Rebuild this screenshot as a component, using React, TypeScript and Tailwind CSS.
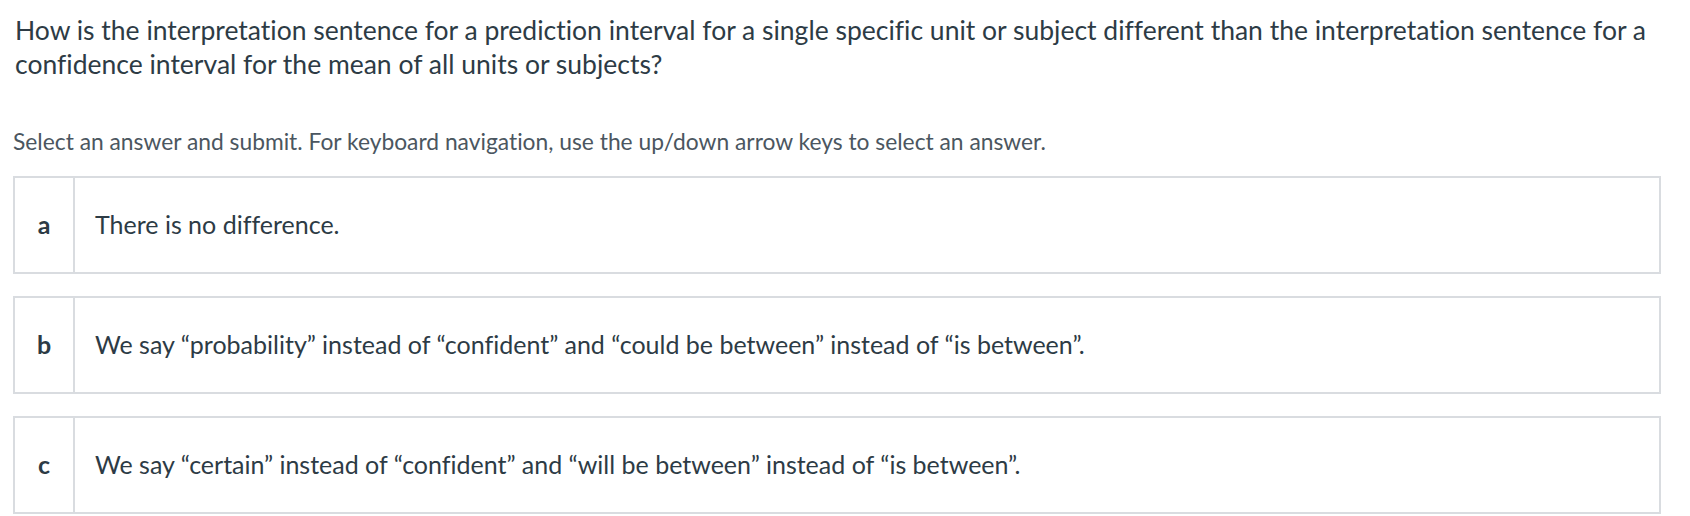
import React from "react";

const options = [
  { k: "a", t: "There is no difference." },
  { k: "b", t: "We say \u201cprobability\u201d instead of \u201cconfident\u201d and \u201ccould be between\u201d instead of \u201cis between\u201d." },
  { k: "c", t: "We say \u201ccertain\u201d instead of \u201cconfident\u201d and \u201cwill be between\u201d instead of \u201cis between\u201d." },
];

export default function App() {
  return (
    <div className="w-[1690px] h-[516px] bg-white overflow-hidden pl-[13px] pr-[29px] pt-[13px] [font-variant-ligatures:none]" style={{ fontFamily: "Lato, 'Liberation Sans', sans-serif" }}>
      <p className="text-[26.5px] leading-[34px] text-[#2d3b45] pl-[2px]">
        How is the interpretation sentence for a prediction interval for a single specific unit or subject different than the interpretation sentence for a confidence interval for the mean of all units or subjects?
      </p>
      <p className="mt-[45px] text-[22.8px] leading-[30px] text-[#4b5660]">
        Select an answer and submit. For keyboard navigation, use the up/down arrow keys to select an answer.
      </p>
      <div className="mt-[20px] flex flex-col gap-[22px]">
        {options.map((o) => (
          <div key={o.k} className="flex h-[98px] border-2 border-[#d9dce0]">
            <div className="w-[60px] shrink-0 border-r-2 border-[#d9dce0] flex items-center justify-center text-[25px] font-bold text-[#2d3b45]">
              {o.k}
            </div>
            <div className="flex items-center pl-[20px] text-[25px] text-[#2d3b45]">{o.t}</div>
          </div>
        ))}
      </div>
    </div>
  );
}
